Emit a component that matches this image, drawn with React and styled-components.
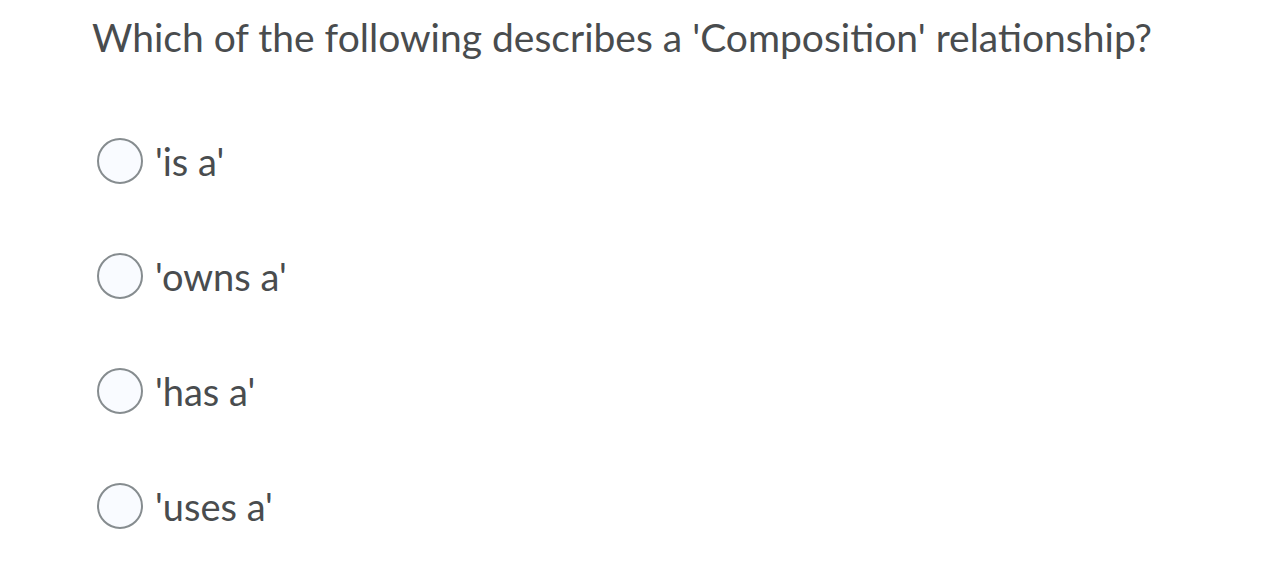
import styled, { createGlobalStyle } from "styled-components"

const GlobalStyle = createGlobalStyle`
    html, body {
        margin: 0;
        padding: 0;
        background: #ffffff;
    }
    body {
        font-family: Lato, "Liberation Sans", sans-serif;
        color: #494c4e;
    }
`

const Page = styled.div`
    padding: 11px 0 0 92px;
`

const Question = styled.h1`
    margin: 0;
    font-size: 39px;
    font-weight: 400;
    line-height: 52px;
`

const Options = styled.div`
    display: flex;
    flex-direction: column;
    gap: 69px;
    margin-top: 75px;
    padding-left: 5px;
`

const Option = styled.label`
    display: flex;
    align-items: center;
    gap: 12px;
    height: 46px;
    font-size: 38px;
    cursor: pointer;
`

const Radio = styled.span`
    box-sizing: border-box;
    width: 46px;
    height: 46px;
    border-radius: 50%;
    border: 2px solid #868c8f;
    background: #f9fbff;
    flex-shrink: 0;
`

const answers = ["'is a'", "'owns a'", "'has a'", "'uses a'"]

const App = () => {
  return (
    <>
        <GlobalStyle />
        <Page>
            <Question>Which of the following describes a 'Composition' relationship?</Question>
            <Options>
                {answers.map((a) => (
                    <Option key={a}>
                        <Radio />
                        {a}
                    </Option>
                ))}
            </Options>
        </Page>
    </>
  )
}

export default App
